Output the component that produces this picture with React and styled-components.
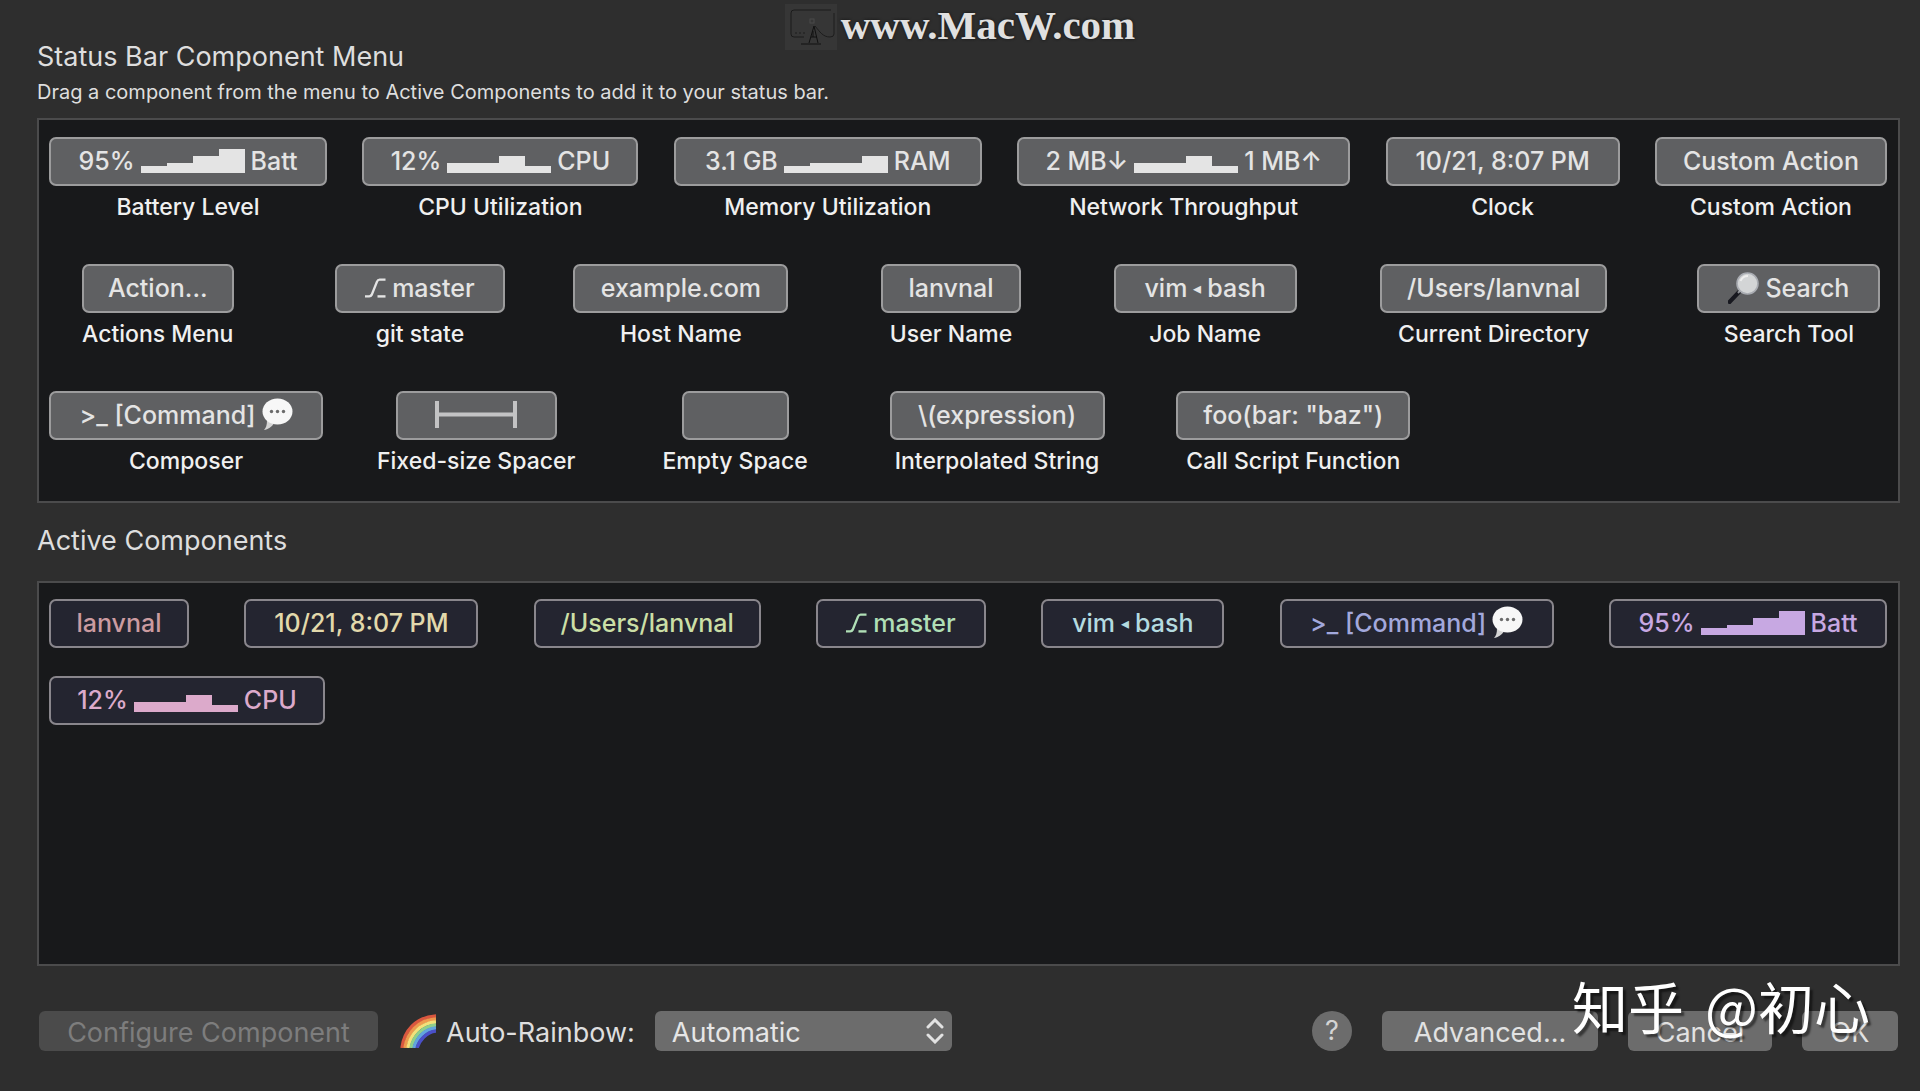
import React from 'react'
import styled, { createGlobalStyle } from 'styled-components'

const LEVELS = {
  battery: [7, 10, 17, 24],
  cpu: [10, 10, 17, 7],
  memory: [7, 10, 10, 17],
  network: [10, 10, 17, 7],
}

const MENU_ROWS = [
  [
    { kind: 'battery', label: 'Battery Level', width: 278 },
    { kind: 'cpu', label: 'CPU Utilization', width: 276 },
    { kind: 'memory', label: 'Memory Utilization', width: 308 },
    { kind: 'network', label: 'Network Throughput', width: 333 },
    { kind: 'clock', label: 'Clock', width: 234 },
    { kind: 'custom', label: 'Custom Action', width: 232 },
  ],
  [
    { kind: 'actions', label: 'Actions Menu', width: 152 },
    { kind: 'git', label: 'git state', width: 170 },
    { kind: 'host', label: 'Host Name', width: 215 },
    { kind: 'user', label: 'User Name', width: 140 },
    { kind: 'job', label: 'Job Name', width: 183 },
    { kind: 'directory', label: 'Current Directory', width: 227 },
    { kind: 'search', label: 'Search Tool', width: 183 },
  ],
  [
    { kind: 'composer', label: 'Composer', width: 274 },
    { kind: 'spacer', label: 'Fixed-size Spacer', width: 161 },
    { kind: 'empty', label: 'Empty Space', width: 107 },
    { kind: 'string', label: 'Interpolated String', width: 215 },
    { kind: 'script', label: 'Call Script Function', width: 234 },
  ],
]

const ACTIVE_ROWS = [
  [
    { kind: 'user', color: '#cb9ba0', width: 140 },
    { kind: 'clock', color: '#e2d9ab', width: 234 },
    { kind: 'directory', color: '#cbdfa6', width: 227 },
    { kind: 'git', color: '#b0dfb6', width: 170 },
    { kind: 'job', color: '#b4dbe0', width: 183 },
    { kind: 'composer', color: '#a2a8dc', width: 274 },
    { kind: 'battery', color: '#c7a8e2', width: 278 },
  ],
  [
    { kind: 'cpu', color: '#dcaacb', width: 276 },
  ],
]

const Sparkline = ({ levels }) => (
  <SparkSvg viewBox="0 0 104 24" aria-hidden="true">
    {levels.map((level, i) => (
      <rect key={i} x={i * 26} y={24 - level} width="26" height={level} fill="currentColor" />
    ))}
  </SparkSvg>
)

const BranchIcon = () => (
  <svg width="21" height="20" viewBox="0 0 21 20" fill="none" stroke="currentColor" strokeWidth="2.4" aria-hidden="true">
    <path d="M0 18.4H4.2C5.6 18.4 6.2 17.8 6.8 16.6L12 3.6C12.6 2.2 13.2 1.6 14.6 1.6H20.5" />
    <path d="M12.5 18.4H20.5" />
  </svg>
)

const BubbleIcon = () => (
  <svg width="31" height="33" viewBox="0 0 31 33" aria-hidden="true">
    <path d="M5 22C5 27 4 30 2 32C6 31.5 10 29 12 25Z" fill="#d4d4d4" />
    <ellipse cx="15.5" cy="13.5" rx="15" ry="13" fill="#f7f7f7" />
    <circle cx="9.5" cy="13.5" r="1.7" fill="#6b6b6b" />
    <circle cx="15.5" cy="13.5" r="1.7" fill="#6b6b6b" />
    <circle cx="21.5" cy="13.5" r="1.7" fill="#6b6b6b" />
  </svg>
)

const MagnifierIcon = () => (
  <svg width="31" height="32" viewBox="0 0 31 32" aria-hidden="true">
    <path d="M1.5 30L11 20" stroke="#17181f" strokeWidth="4" strokeLinecap="round" />
    <path d="M10 21L13 17.5" stroke="#8d8f94" strokeWidth="2" />
    <circle cx="19.5" cy="11.5" r="10.5" fill="#d3d5d6" stroke="#a9acb2" strokeWidth="1.6" />
    <path d="M12.5 9A8 8 0 0 1 20 4" stroke="#eeeeee" strokeWidth="2" fill="none" />
  </svg>
)

const SpacerIcon = () => (
  <svg width="82" height="27" viewBox="0 0 82 27" fill="none" stroke="#c3c3c4" strokeWidth="4" aria-hidden="true">
    <path d="M2 0V27M80 0V27M2 13.5H80" />
  </svg>
)

const RAINBOW = ['#d9573f', '#ee9a4e', '#f3e07a', '#8fcf8a', '#62a5dd', '#4a50c8']

const RainbowIcon = () => (
  <svg width="36" height="34" viewBox="0 0 36 34" fill="none" aria-hidden="true">
    {RAINBOW.map((color, i) => (
      <path
        key={color}
        d={`M${2 + i * 3} 34C${4 + i * 3} ${17 + i * 2} ${16 + i * 2} ${3 + i * 3} 36 ${2 + i * 3}`}
        stroke={color}
        strokeWidth="3.4"
      />
    ))}
  </svg>
)

const MonitorIcon = () => (
  <svg width="52" height="46" viewBox="0 0 52 46" fill="none" stroke="#101010" strokeWidth="1" aria-hidden="true">
    <rect width="52" height="46" fill="#363636" stroke="none" />
    <path d="M46 6H9Q6 6 6 9V30Q6 33 9 33H19" strokeOpacity="0.7" />
    <path d="M49 9V30Q49 33 45 33C38 33 35 28 30 22" stroke="#1c1c1c" />
    <path d="M29 22L24 39M29 22L33 39M26 33H32M16 40H36M28 27V33" />
    <rect x="25" y="15" width="4" height="4" stroke="#4a4a4a" />
    <path d="M10 29H20" stroke="#1c1c1c" strokeDasharray="2 2" />
  </svg>
)

const ArrowsIcon = () => (
  <ArrowsSvg width="18" height="26" viewBox="0 0 18 26" aria-hidden="true">
    <path d="M2 9L9 2L16 9M2 17L9 24L16 17" />
  </ArrowsSvg>
)

// what every component shows inside its chip
const FACES = {
  battery: <>95%<Sparkline levels={LEVELS.battery} />Batt</>,
  cpu: <>12%<Sparkline levels={LEVELS.cpu} />CPU</>,
  memory: <>3.1 GB<Sparkline levels={LEVELS.memory} />RAM</>,
  network: <>2 MB↓<Sparkline levels={LEVELS.network} />1 MB↑</>,
  clock: '10/21, 8:07 PM',
  custom: 'Custom Action',
  actions: 'Action...',
  git: <><BranchIcon />master</>,
  host: 'example.com',
  user: 'lanvnal',
  job: <>vim<small>◂</small>bash</>,
  directory: '/Users/lanvnal',
  search: <><MagnifierIcon />Search</>,
  composer: <>&gt;_ [Command]<BubbleIcon /></>,
  spacer: <SpacerIcon />,
  empty: null,
  string: '\\(expression)',
  script: 'foo(bar: "baz")',
}

export default class App extends React.Component {

  state = {
    rainbow: 'Automatic',
  }

  changeRainbow = (e) => {
    this.setState({ rainbow: e.target.value })
  }

  render () {
    const { rainbow } = this.state
    return (
      <Page>
        <GlobalStyle />
        <SiteMark>
          <MonitorIcon />
          <span>www.MacW.com</span>
        </SiteMark>

        <Title>Status Bar Component Menu</Title>
        <Hint>Drag a component from the menu to Active Components to add it to your status bar.</Hint>
        <Panel>
          {MENU_ROWS.map((row, i) => (
            <MenuRow key={i} $last={i === MENU_ROWS.length - 1}>
              {row.map(({ kind, label, width }) => (
                <Item key={kind}>
                  <Chip type="button" draggable aria-label={label} $width={width}>{FACES[kind]}</Chip>
                  <ItemLabel>{label}</ItemLabel>
                </Item>
              ))}
            </MenuRow>
          ))}
        </Panel>

        <ActiveTitle>Active Components</ActiveTitle>
        <ActivePanel>
          {ACTIVE_ROWS.map((row, i) => (
            <ActiveRow key={i}>
              {row.map(({ kind, color, width }) => (
                <ActiveChip key={kind} type="button" draggable $width={width} $color={color}>
                  {FACES[kind]}
                </ActiveChip>
              ))}
            </ActiveRow>
          ))}
        </ActivePanel>

        <Footer>
          <PushButton type="button" disabled $width={339}>Configure Component</PushButton>
          <RainbowField>
            <RainbowIcon />
            <label htmlFor="rainbow">Auto-Rainbow:</label>
            <SelectBox>
              <Select id="rainbow" value={rainbow} onChange={this.changeRainbow}>
                <option>Automatic</option>
                <option>Disabled</option>
                <option>Light Colors</option>
                <option>Dark Colors</option>
              </Select>
              <ArrowsIcon />
            </SelectBox>
          </RainbowField>
          <Actions>
            <HelpButton type="button" aria-label="Help">?</HelpButton>
            <PushButton type="button" $width={216}>Advanced...</PushButton>
            <PushButton type="button" $width={144}>Cancel</PushButton>
            <PushButton type="button" $width={96}>OK</PushButton>
          </Actions>
          <Signature>
            <span>知乎</span>
            <span>@初心</span>
          </Signature>
        </Footer>
      </Page>
    )
  }
}

const GlobalStyle = createGlobalStyle`
  * {
    box-sizing: border-box;
  }
  body {
    margin: 0;
    background-color: #2e2e2e;
  }
  button, select {
    font: inherit;
    color: inherit;
  }
`
const Page = styled.div`
  position: relative;
  display: flex;
  flex-direction: column;
  min-height: 100vh;
  padding: 38px 20px 40px 37px;
  color: #dedede;
  font-family: Inter, "Liberation Sans", sans-serif;
  white-space: nowrap;
`
const SiteMark = styled.div`
  position: absolute;
  top: 4px;
  left: 0;
  right: 0;
  display: flex;
  align-items: flex-start;
  justify-content: center;
  gap: 4px;
  color: #e0e0e0;
  font-family: "Liberation Serif", serif;
  font-size: 41px;
  font-weight: bold;
  line-height: 42px;
  text-shadow: 0 0 3px #111111;
`
const Title = styled.h1`
  margin: 0;
  font-size: 27px;
  font-weight: 400;
  line-height: 38px;
`
const ActiveTitle = styled(Title).attrs({ as: 'h2' })`
  margin: 19px 0 21px;
`
const Hint = styled.p`
  margin: 0 0 10px;
  font-size: 20px;
  font-weight: 400;
  line-height: 32px;
`
const Panel = styled.section`
  display: flex;
  flex: 1 1 0;
  flex-direction: column;
  gap: 44px;
  padding: 17px 11px 17px 10px;
  border: 2px solid #4b4b4c;
  background-color: #18191b;
`
const ActivePanel = styled(Panel)`
  gap: 28px;
  padding-top: 16px;
  padding-bottom: 18px;
`
const MenuRow = styled.div`
  display: flex;
  justify-content: ${({ $last }) => ($last ? 'flex-start' : 'space-between')};
  gap: 21px;
`
const ActiveRow = styled.div`
  display: flex;
  justify-content: space-between;
  gap: 21px;
`
const Item = styled.div`
  display: flex;
  flex-direction: column;
  align-items: center;
  gap: 8px;
`
const ItemLabel = styled.div`
  padding: 0 33px;
  color: #f0f0f0;
  font-size: 23px;
  font-weight: 500;
  line-height: 26px;
`
const Chip = styled.button`
  display: flex;
  align-items: center;
  justify-content: center;
  gap: 6px;
  width: ${({ $width }) => $width}px;
  height: 49px;
  padding: 0 0 2px;
  border: 2px solid #9c9c9d;
  border-radius: 7px;
  background-color: #5f6062;
  color: #e4e4e4;
  font-size: 25px;
  font-weight: 500;
  line-height: 30px;
  white-space: nowrap;

  small {
    font-size: 16px;
  }
`
const ActiveChip = styled(Chip)`
  border-color: #89868c;
  background-color: #242530;
  color: ${({ $color }) => $color};
`
const SparkSvg = styled.svg`
  width: 104px;
  height: 24px;
`
const Footer = styled.footer`
  position: relative;
  display: flex;
  align-items: center;
  margin-top: 45px;
  padding: 0 2px;
  font-size: 27px;
  line-height: 40px;
`
const PushButton = styled.button`
  width: ${({ $width }) => $width}px;
  height: 40px;
  padding: 2px 0 0;
  border: none;
  border-radius: 6px;
  background-color: #6c6c6c;
  color: #e2e2e2;

  &:disabled {
    background-color: #4b4b4b;
    color: #7d7d7d;
  }
`
const RainbowField = styled.div`
  display: flex;
  align-items: center;
  margin-left: 22px;

  label {
    height: 40px;
    margin: 0 20px 0 10px;
    padding-top: 2px;
  }
`
const SelectBox = styled.div`
  position: relative;
  width: 297px;
`
const Select = styled.select`
  display: block;
  width: 100%;
  height: 40px;
  padding: 2px 40px 0 17px;
  appearance: none;
  border: none;
  border-radius: 6px;
  background-color: #6c6c6c;
  color: #e6e6e6;
`
const ArrowsSvg = styled.svg`
  position: absolute;
  top: 7px;
  right: 8px;
  fill: none;
  stroke: #e2e2e2;
  stroke-width: 3;
  stroke-linecap: round;
  pointer-events: none;
`
const Actions = styled.div`
  display: flex;
  gap: 30px;
  margin-left: auto;
`
const HelpButton = styled.button`
  width: 40px;
  height: 40px;
  padding: 0;
  border: none;
  border-radius: 50%;
  background-color: #6c6c6c;
  color: #d4d4d4;
`
const Signature = styled.div`
  position: absolute;
  right: 30px;
  bottom: 16px;
  display: flex;
  gap: 21px;
  color: #ffffff;
  font-family: "Noto Sans CJK SC", sans-serif;
  font-size: 56px;
  line-height: 60px;
  text-shadow: 3px 3px 2px rgba(0, 0, 0, 0.5);
  pointer-events: none;
`
